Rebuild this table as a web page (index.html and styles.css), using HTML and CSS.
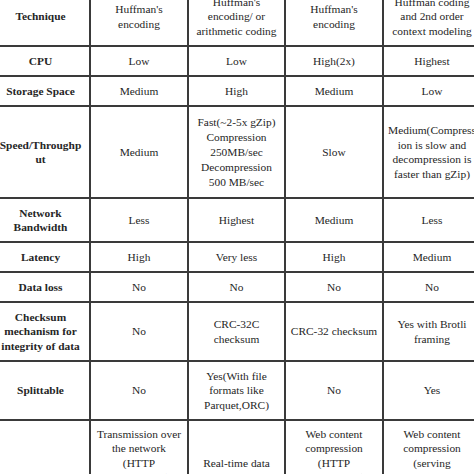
FILE: index.html
```html
<!DOCTYPE html>
<html>
<head>
<meta charset="utf-8">
<link rel="stylesheet" href="styles.css">
</head>
<body>
<div class="cmp">
  <div class="cell lab">Technique</div>
  <div class="cell">Huffman's<br>encoding</div>
  <div class="cell">Huffman's<br>encoding/ or<br>arithmetic coding</div>
  <div class="cell">Huffman's<br>encoding</div>
  <div class="cell">Huffman coding<br>and 2nd order<br>context modeling</div>

  <div class="cell lab">CPU</div>
  <div class="cell">Low</div>
  <div class="cell">Low</div>
  <div class="cell">High(2x)</div>
  <div class="cell">Highest</div>

  <div class="cell lab">Storage Space</div>
  <div class="cell">Medium</div>
  <div class="cell">High</div>
  <div class="cell">Medium</div>
  <div class="cell">Low</div>

  <div class="cell lab">Speed/Throughp<br>ut</div>
  <div class="cell">Medium</div>
  <div class="cell tall">Fast(~2-5x gZip)<br>Compression<br>250MB/sec<br>Decompression<br>500 MB/sec</div>
  <div class="cell">Slow</div>
  <div class="cell">Medium(Compress<br>ion is slow and<br>decompression is<br>faster than gZip)</div>

  <div class="cell lab">Network<br>Bandwidth</div>
  <div class="cell">Less</div>
  <div class="cell">Highest</div>
  <div class="cell">Medium</div>
  <div class="cell">Less</div>

  <div class="cell lab">Latency</div>
  <div class="cell">High</div>
  <div class="cell">Very less</div>
  <div class="cell">High</div>
  <div class="cell">Medium</div>

  <div class="cell lab">Data loss</div>
  <div class="cell">No</div>
  <div class="cell">No</div>
  <div class="cell">No</div>
  <div class="cell">No</div>

  <div class="cell lab">Checksum<br>mechanism for<br>integrity of data</div>
  <div class="cell">No</div>
  <div class="cell">CRC-32C<br>checksum</div>
  <div class="cell">CRC-32 checksum</div>
  <div class="cell">Yes with Brotli<br>framing</div>

  <div class="cell lab">Splittable</div>
  <div class="cell">No</div>
  <div class="cell">Yes(With file<br>formats like<br>Parquet,ORC)</div>
  <div class="cell">No</div>
  <div class="cell">Yes</div>

  <div class="cell lab"></div>
  <div class="cell">Transmission over<br>the network<br>(HTTP<br>compression)<br>Hadoop</div>
  <div class="cell">Real-time data</div>
  <div class="cell">Web content<br>compression<br>(HTTP<br>compression)<br>web servers</div>
  <div class="cell">Web content<br>compression<br>(serving<br>static web<br>content)</div>
</div>
</body>
</html>
```
FILE: styles.css
```css
html, body {
  margin: 0;
  padding: 0;
  background: #ffffff;
  overflow: hidden;
}
.cmp {
  display: grid;
  grid-template-columns: 97px 96px 95px 96px 96px;
  grid-template-rows: 57px 28px 28px 90px 42px 28px 28px 57px 57px 84px;
  gap: 2px;
  padding: 2px;
  margin: -14px 0 0 -10px;
  width: max-content;
  background: #3a3a3a;
  font-family: "Liberation Serif", "DejaVu Serif", serif;
  font-size: 11.4px;
  line-height: 14.5px;
  color: #262626;
}
.cell {
  background: #ffffff;
  display: flex;
  align-items: center;
  justify-content: center;
  text-align: center;
  white-space: nowrap;
}
.lab { font-weight: bold; }
.tall { line-height: 15px; }
```
